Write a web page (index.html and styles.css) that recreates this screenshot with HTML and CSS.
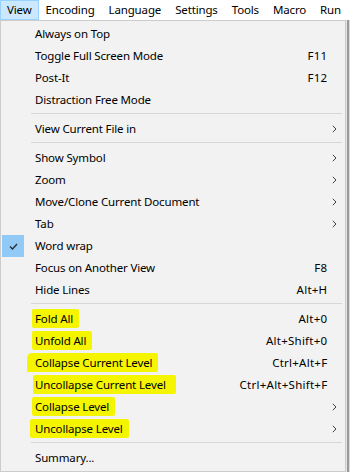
FILE: index.html
```html
<!DOCTYPE html>
<html lang="en">
<head>
<meta charset="utf-8">
<title>View menu</title>
<link rel="stylesheet" href="styles.css">
</head>
<body>
<div class="screen">
  <div class="menubar">
    <span class="mb-item active">View</span>
    <span class="mb-item">Encoding</span>
    <span class="mb-item">Language</span>
    <span class="mb-item">Settings</span>
    <span class="mb-item">Tools</span>
    <span class="mb-item">Macro</span>
    <span class="mb-item">Run</span>
  </div>
  <div class="body">
    <div class="menu">
      <div class="item"><span class="icon"></span><span class="label">Always on Top</span><span class="key"></span><span class="sub"></span></div>
      <div class="item"><span class="icon"></span><span class="label">Toggle Full Screen Mode</span><span class="key">F11</span><span class="sub"></span></div>
      <div class="item"><span class="icon"></span><span class="label">Post-It</span><span class="key">F12</span><span class="sub"></span></div>
      <div class="item"><span class="icon"></span><span class="label">Distraction Free Mode</span><span class="key"></span><span class="sub"></span></div>
      <div class="sep"></div>
      <div class="item"><span class="icon"></span><span class="label">View Current File in</span><span class="key"></span><span class="sub"><svg class="chev" width="5" height="8" viewBox="0 0 5 8"><polyline points="0.8,0.8 4,4 0.8,7.2"/></svg></span></div>
      <div class="sep"></div>
      <div class="item"><span class="icon"></span><span class="label">Show Symbol</span><span class="key"></span><span class="sub"><svg class="chev" width="5" height="8" viewBox="0 0 5 8"><polyline points="0.8,0.8 4,4 0.8,7.2"/></svg></span></div>
      <div class="item"><span class="icon"></span><span class="label">Zoom</span><span class="key"></span><span class="sub"><svg class="chev" width="5" height="8" viewBox="0 0 5 8"><polyline points="0.8,0.8 4,4 0.8,7.2"/></svg></span></div>
      <div class="item"><span class="icon"></span><span class="label">Move/Clone Current Document</span><span class="key"></span><span class="sub"><svg class="chev" width="5" height="8" viewBox="0 0 5 8"><polyline points="0.8,0.8 4,4 0.8,7.2"/></svg></span></div>
      <div class="item"><span class="icon"></span><span class="label">Tab</span><span class="key"></span><span class="sub"><svg class="chev" width="5" height="8" viewBox="0 0 5 8"><polyline points="0.8,0.8 4,4 0.8,7.2"/></svg></span></div>
      <div class="item"><span class="icon checked"><svg width="22" height="22" viewBox="0 0 22 22"><polyline class="tick" points="8,11.5 10.5,14 15,9"/></svg></span><span class="label">Word wrap</span><span class="key"></span><span class="sub"></span></div>
      <div class="item"><span class="icon"></span><span class="label">Focus on Another View</span><span class="key">F8</span><span class="sub"></span></div>
      <div class="item"><span class="icon"></span><span class="label">Hide Lines</span><span class="key">Alt+H</span><span class="sub"></span></div>
      <div class="sep"></div>
      <div class="item"><span class="icon"></span><span class="label"><span class="hl hl-fold">Fold All</span></span><span class="key">Alt+0</span><span class="sub"></span></div>
      <div class="item"><span class="icon"></span><span class="label"><span class="hl hl-unfold">Unfold All</span></span><span class="key">Alt+Shift+0</span><span class="sub"></span></div>
      <div class="item"><span class="icon"></span><span class="label"><span class="hl hl-ccl">Collapse Current Level</span></span><span class="key">Ctrl+Alt+F</span><span class="sub"></span></div>
      <div class="item"><span class="icon"></span><span class="label"><span class="hl hl-ucl">Uncollapse Current Level</span></span><span class="key">Ctrl+Alt+Shift+F</span><span class="sub"></span></div>
      <div class="item"><span class="icon"></span><span class="label"><span class="hl hl-cl">Collapse Level</span></span><span class="key"></span><span class="sub"><svg class="chev" width="5" height="8" viewBox="0 0 5 8"><polyline points="0.8,0.8 4,4 0.8,7.2"/></svg></span></div>
      <div class="item"><span class="icon"></span><span class="label"><span class="hl hl-ul">Uncollapse Level</span></span><span class="key"></span><span class="sub"><svg class="chev" width="5" height="8" viewBox="0 0 5 8"><polyline points="0.8,0.8 4,4 0.8,7.2"/></svg></span></div>
      <div class="sep"></div>
      <div class="item"><span class="icon"></span><span class="label">Summary...</span><span class="key"></span><span class="sub"></span></div>
    </div>
    <div class="edge"></div>
  </div>
</div>
</body>
</html>
```

FILE: styles.css
```css
html, body {
  margin: 0;
  padding: 0;
  background: #ffffff;
}

.screen {
  width: 350px;
  height: 472px;
  overflow: hidden;
  font-family: "Segoe UI", "Noto Sans", "DejaVu Sans", sans-serif;
  font-size: 11.5px;
  letter-spacing: -0.15px;
  color: #000000;
  display: flex;
  flex-direction: column;
}

.menubar {
  height: 20px;
  flex: none;
  display: flex;
  align-items: stretch;
  background: #ffffff;
  white-space: nowrap;
}

.mb-item {
  padding: 0 7px;
  line-height: 20px;
}

.mb-item.active {
  background: #cce8ff;
  box-shadow: inset 0 0 0 1px #99d1ff;
}

.body {
  flex: 1;
  display: flex;
  min-height: 0;
}

.menu {
  width: 344px;
  flex: none;
  background: #f2f2f2;
  border: 1px solid #cccccc;
  padding: 2px 0;
  display: flex;
  flex-direction: column;
}

.item {
  height: 22px;
  display: grid;
  grid-template-columns: 22px 1fr auto 18px;
  align-items: center;
  padding-left: 1px;
  white-space: nowrap;
}

.icon {
  width: 22px;
  height: 22px;
  display: block;
}

.icon.checked {
  background: #91c9f7;
}

.icon svg {
  display: block;
}

.tick {
  fill: none;
  stroke: #2b2b2b;
  stroke-width: 1.3;
}

.label {
  padding-left: 11px;
  line-height: 22px;
}

.key {
  line-height: 22px;
  text-align: right;
  letter-spacing: 0.25px;
  margin-right: -0.4px;
}

.sub {
  display: flex;
  align-items: center;
  padding-left: 5px;
}

.chev {
  display: block;
  fill: none;
  stroke: #404040;
  stroke-width: 1;
}

.sep {
  height: 1px;
  margin: 2px 3px 4px 30px;
  background: #d7d7d7;
}

.hl {
  background: #f5f500;
  padding: 2px 6px 2px 3px;
  margin-left: -3px;
  border-radius: 2px;
}

.hl-ccl {
  padding-left: 8px;
  margin-left: -8px;
  border-radius: 5px 2px 2px 1px;
}

.hl-ucl {
  padding-right: 10px;
  margin-left: -2px;
  padding-left: 2px;
}

.hl-ul {
  padding-left: 5px;
  margin-left: -5px;
}

.edge {
  flex: 1;
  background: linear-gradient(to right, #e4e4e4 0 1px, #9a9a9a 1px 3px, #dcdcdc 3px);
}
```
